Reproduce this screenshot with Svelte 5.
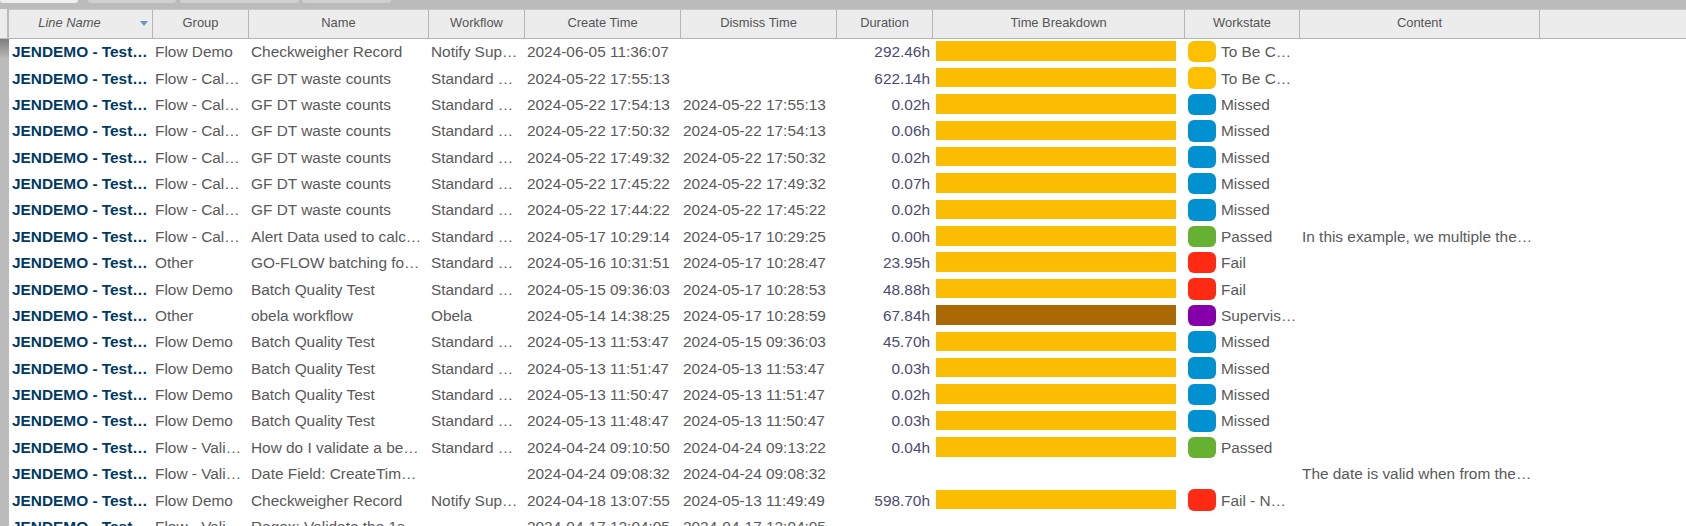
<script lang="ts">
  const tabs = [
    { width: 78, gap: 0 },
    { width: 88, gap: 10 },
    { width: 119, gap: 4 },
    { width: 89, gap: 3 }
  ];

  const columns = [
    { label: 'Line Name', width: 144, sorted: true },
    { label: 'Group', width: 96 },
    { label: 'Name', width: 180 },
    { label: 'Workflow', width: 96 },
    { label: 'Create Time', width: 156 },
    { label: 'Dismiss Time', width: 156 },
    { label: 'Duration', width: 96 },
    { label: 'Time Breakdown', width: 252 },
    { label: 'Workstate', width: 115 },
    { label: 'Content', width: 240 }
  ];

  const colours = {
    amber: '#fcc000',
    blue: '#0092d0',
    green: '#66b032',
    red: '#ff2a14',
    purple: '#8500a8'
  };

  const line = 'JENDEMO - Test Line';
  const calc = 'Flow - Calculations';
  const valid = 'Flow - Validation';
  const demo = 'Flow Demo';
  const waste = 'GF DT waste counts';
  const batch = 'Batch Quality Test';
  const record = 'Checkweigher Record';
  const std = 'Standard Workflow';
  const notify = 'Notify Supervisor';

  const rows = [
    { group: demo, name: record, workflow: notify, created: '2024-06-05 11:36:07', dismissed: '', duration: '292.46h', bar: '#fabd02', dot: colours.amber, state: 'To Be Completed' },
    { group: calc, name: waste, workflow: std, created: '2024-05-22 17:55:13', dismissed: '', duration: '622.14h', bar: '#fabd02', dot: colours.amber, state: 'To Be Completed' },
    { group: calc, name: waste, workflow: std, created: '2024-05-22 17:54:13', dismissed: '2024-05-22 17:55:13', duration: '0.02h', bar: '#fabd02', dot: colours.blue, state: 'Missed' },
    { group: calc, name: waste, workflow: std, created: '2024-05-22 17:50:32', dismissed: '2024-05-22 17:54:13', duration: '0.06h', bar: '#fabd02', dot: colours.blue, state: 'Missed' },
    { group: calc, name: waste, workflow: std, created: '2024-05-22 17:49:32', dismissed: '2024-05-22 17:50:32', duration: '0.02h', bar: '#fabd02', dot: colours.blue, state: 'Missed' },
    { group: calc, name: waste, workflow: std, created: '2024-05-22 17:45:22', dismissed: '2024-05-22 17:49:32', duration: '0.07h', bar: '#fabd02', dot: colours.blue, state: 'Missed' },
    { group: calc, name: waste, workflow: std, created: '2024-05-22 17:44:22', dismissed: '2024-05-22 17:45:22', duration: '0.02h', bar: '#fabd02', dot: colours.blue, state: 'Missed' },
    { group: calc, name: 'Alert Data used to calculate', workflow: std, created: '2024-05-17 10:29:14', dismissed: '2024-05-17 10:29:25', duration: '0.00h', bar: '#fabd02', dot: colours.green, state: 'Passed', content: 'In this example, we multiple the values together' },
    { group: 'Other', name: 'GO-FLOW batching for lines', workflow: std, created: '2024-05-16 10:31:51', dismissed: '2024-05-17 10:28:47', duration: '23.95h', bar: '#fabd02', dot: colours.red, state: 'Fail' },
    { group: demo, name: batch, workflow: std, created: '2024-05-15 09:36:03', dismissed: '2024-05-17 10:28:53', duration: '48.88h', bar: '#fabd02', dot: colours.red, state: 'Fail' },
    { group: 'Other', name: 'obela workflow', workflow: 'Obela', created: '2024-05-14 14:38:25', dismissed: '2024-05-17 10:28:59', duration: '67.84h', bar: '#ab6905', dot: colours.purple, state: 'Supervisor Review' },
    { group: demo, name: batch, workflow: std, created: '2024-05-13 11:53:47', dismissed: '2024-05-15 09:36:03', duration: '45.70h', bar: '#fabd02', dot: colours.blue, state: 'Missed' },
    { group: demo, name: batch, workflow: std, created: '2024-05-13 11:51:47', dismissed: '2024-05-13 11:53:47', duration: '0.03h', bar: '#fabd02', dot: colours.blue, state: 'Missed' },
    { group: demo, name: batch, workflow: std, created: '2024-05-13 11:50:47', dismissed: '2024-05-13 11:51:47', duration: '0.02h', bar: '#fabd02', dot: colours.blue, state: 'Missed' },
    { group: demo, name: batch, workflow: std, created: '2024-05-13 11:48:47', dismissed: '2024-05-13 11:50:47', duration: '0.03h', bar: '#fabd02', dot: colours.blue, state: 'Missed' },
    { group: valid, name: 'How do I validate a beverage', workflow: std, created: '2024-04-24 09:10:50', dismissed: '2024-04-24 09:13:22', duration: '0.04h', bar: '#fabd02', dot: colours.green, state: 'Passed' },
    { group: valid, name: 'Date Field: CreateTime is valid', workflow: '', created: '2024-04-24 09:08:32', dismissed: '2024-04-24 09:08:32', duration: '', content: 'The date is valid when from the record itself' },
    { group: demo, name: record, workflow: notify, created: '2024-04-18 13:07:55', dismissed: '2024-05-13 11:49:49', duration: '598.70h', bar: '#fabd02', dot: colours.red, state: 'Fail - N…' },
    { group: valid, name: 'Regex: Validate the 1st field', workflow: '', created: '2024-04-17 12:04:05', dismissed: '2024-04-17 12:04:05', duration: '' }
  ];
</script>

<div class="page">
  <div class="tabs">
    {#each tabs as tab, i}
      <div class="tab" class:current={i === 0} style="width: {tab.width}px; margin-left: {tab.gap}px"></div>
    {/each}
  </div>

  <div class="main">
    <div class="gutter">
      <div class="gutter-top"></div>
      <div class="gutter-shade"></div>
    </div>

    <div class="grid">
      <div class="head">
        {#each columns as col}
          <div class="th" class:sorted={col.sorted} style="width: {col.width}px">
            {col.label}
            {#if col.sorted}<span class="arrow"></span>{/if}
          </div>
        {/each}
        <div class="th-rest"></div>
      </div>

      <div class="body">
        {#each rows as row}
          <div class="row">
            <div class="td line" style="width: 144px">{line}</div>
            <div class="td" style="width: 96px">{row.group}</div>
            <div class="td" style="width: 180px">{row.name}</div>
            <div class="td" style="width: 96px">{row.workflow}</div>
            <div class="td" style="width: 156px">{row.created}</div>
            <div class="td" style="width: 156px">{row.dismissed}</div>
            <div class="td duration" style="width: 96px">{row.duration}</div>
            <div class="td bars" style="width: 252px">
              {#if row.bar}<div class="bar" style="background: {row.bar}"></div>{/if}
            </div>
            <div class="td state" style="width: 115px">
              {#if row.dot}
                <span class="dot" style="background: {row.dot}"></span>
                <span class="state-text">{row.state}</span>
              {/if}
            </div>
            <div class="td" style="width: 240px">{row.content ?? ''}</div>
          </div>
        {/each}
      </div>
    </div>
  </div>
</div>

<style>
  :global(body) {
    margin: 0;
    background: #fff;
  }

  .page {
    width: 1686px;
    height: 526px;
    overflow: hidden;
    font-family: 'Liberation Sans', Arial, sans-serif;
    background: #fff;
  }

  .tabs {
    display: flex;
    height: 9px;
    background: #bbb;
    align-items: flex-start;
  }

  .tab {
    height: 3px;
    background: #d0d0d0;
    border-radius: 0 0 3px 3px;
  }

  .tab.current {
    background: #efefef;
  }

  .main {
    display: flex;
    height: 517px;
  }

  .gutter {
    width: 9px;
    flex: none;
    background: #bbb;
  }

  .gutter-top {
    width: 7px;
    height: 29px;
    background: #ececec;
  }

  .gutter-shade {
    margin-top: 1px;
    height: 20px;
    background: linear-gradient(#7d7d7d, #bbb);
  }

  .grid {
    flex: 1;
    min-width: 0;
  }

  .head {
    display: flex;
    height: 30px;
    background: #ececec;
    border-top: 1px solid #c8c8c8;
    border-bottom: 1px solid #b5b5b5;
    box-sizing: border-box;
  }

  .th {
    box-sizing: border-box;
    flex: none;
    position: relative;
    border-right: 1px solid #b5b5b5;
    font-size: 12.9px;
    line-height: 26px;
    text-align: center;
    color: #555;
  }

  .th.sorted {
    font-style: italic;
    padding-right: 22px;
  }

  .arrow {
    position: absolute;
    right: 4px;
    top: 11px;
    border-left: 4.5px solid transparent;
    border-right: 4.5px solid transparent;
    border-top: 5px solid #5b9bd5;
  }

  .th-rest {
    flex: 1;
  }

  .body {
    display: grid;
    grid-auto-rows: 26.38px;
    margin-top: -1px;
  }

  .row {
    display: flex;
    align-items: center;
    font-size: 15.4px;
    color: #595959;
  }

  .td {
    box-sizing: border-box;
    flex: none;
    padding: 2px 5px 0 2px;
    white-space: nowrap;
    overflow: hidden;
    text-overflow: ellipsis;
    line-height: 26px;
  }

  .line {
    padding-left: 3px;
    padding-right: 4px;
    font-weight: 700;
    color: #003a63;
  }

  .duration {
    text-align: right;
    padding-left: 3px;
    padding-right: 3px;
    color: #4b4b72;
  }

  .bars {
    padding: 0 0 0 3px;
    display: flex;
    align-items: center;
  }

  .bar {
    width: 240px;
    height: 19.6px;
  }

  .state {
    display: flex;
    align-items: center;
    gap: 5px;
    padding: 0 2px 0 3px;
  }

  .dot {
    flex: none;
    width: 28px;
    height: 21.6px;
    margin-top: 1px;
    border-radius: 6px;
  }

  .state-text {
    padding-top: 2px;
    overflow: hidden;
    text-overflow: ellipsis;
  }
</style>
